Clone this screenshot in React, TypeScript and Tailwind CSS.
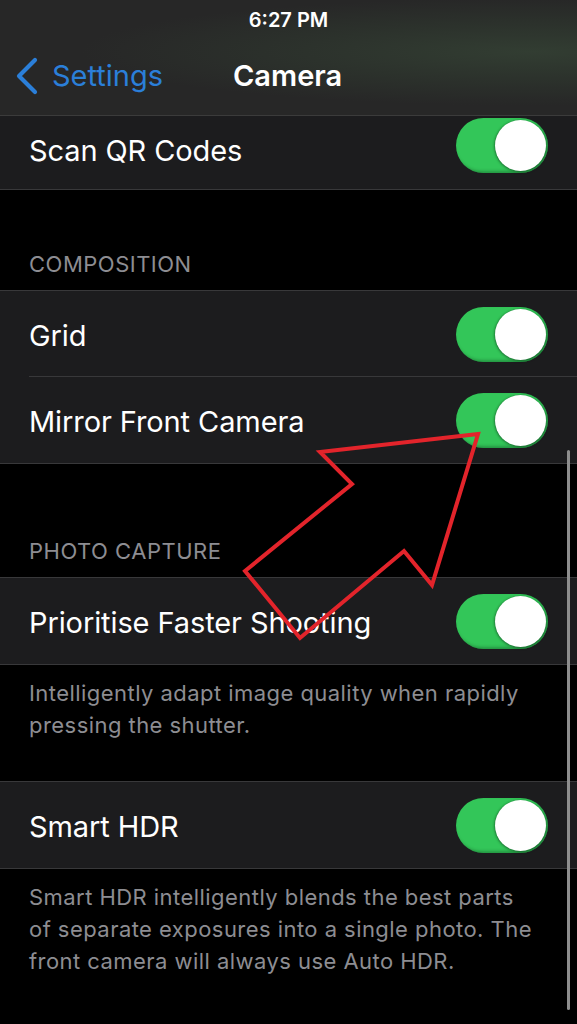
import React from "react";

function Toggle() {
  return (
    <div className="w-[92px] h-[55px] rounded-full bg-[#33c659] flex items-center justify-end p-[2px] shadow-[inset_-2px_-2px_3px_rgba(20,90,40,0.45)]">
      <div className="w-[51px] h-[51px] rounded-full bg-white shadow-[0_1px_3px_rgba(0,0,0,0.35),-1px_0_2px_rgba(20,100,40,0.4)]" />
    </div>
  );
}

function Row({ label, inset }: { label: string; inset?: boolean }) {
  return (
    <div className="h-[86px] flex items-center pl-[29px] pr-[29px] relative">
      <span className="flex-1 text-[29px] text-white tracking-[-0.1px] pt-[4px]">{label}</span>
      <Toggle />
      {inset ? <div className="absolute left-[29px] right-0 bottom-0 h-px bg-[#38383a]" /> : null}
    </div>
  );
}

export default function App() {
  return (
    <div
      className="w-[577px] h-[1024px] bg-black overflow-hidden relative"
      style={{ fontFamily: "Inter, 'Noto Sans', sans-serif" }}
    >
      {/* Header */}
      <div className="h-[116px] bg-[#272727] bg-[radial-gradient(ellipse_at_92%_45%,#323d32_0%,#2c322c_30%,transparent_60%)] border-b border-[#3b3b3b] flex flex-col">
        <div className="h-[39px] flex items-center justify-center">
          <span className="text-[20px] font-semibold text-white">6:27 PM</span>
        </div>
        <div className="h-[75px] flex items-center relative">
          <div className="flex items-center pl-[14px] gap-[12px] pb-[2px]">
            <svg width="26" height="38" viewBox="0 0 26 38" fill="none">
              <path d="M21 3 L5 19 L21 35" stroke="#2b7fd9" strokeWidth="4.2" strokeLinecap="round" strokeLinejoin="round" />
            </svg>
            <span className="text-[29px] text-[#2b7fd9] tracking-[0px]">Settings</span>
          </div>
          <span className="absolute left-[233px] top-[15px] text-[29px] font-semibold text-white tracking-[0px]">Camera</span>
        </div>
      </div>

      {/* Scan QR */}
      <div className="bg-[#1c1c1e] border-b border-[#38383a]">
        <div className="h-[73px] flex items-center pl-[29px] pr-[29px]">
          <span className="flex-1 text-[29px] text-white tracking-[-0.1px] pb-[4px]">Scan QR Codes</span>
          <div className="pb-[14px]">
            <Toggle />
          </div>
        </div>
      </div>

      {/* Composition */}
      <div className="h-[100px] flex items-end pl-[29px] pb-[9px]">
        <span className="text-[22px] text-[#8d8d92] tracking-[0.5px]">COMPOSITION</span>
      </div>
      <div className="bg-[#1c1c1e] border-y border-[#38383a]">
        <Row label="Grid" inset />
        <Row label="Mirror Front Camera" />
      </div>

      {/* Photo capture */}
      <div className="h-[113px] flex items-end pl-[29px] pb-[9px]">
        <span className="text-[22px] text-[#8d8d92] tracking-[0.5px]">PHOTO CAPTURE</span>
      </div>
      <div className="bg-[#1c1c1e] border-y border-[#38383a]">
        <Row label="Prioritise Faster Shooting" />
      </div>
      <div className="h-[116px] pl-[29px] pr-[44px] pt-[12px]">
        <p className="text-[22px] leading-[32px] text-[#8d8d92] tracking-[0.45px]">
          Intelligently adapt image quality when rapidly pressing the shutter.
        </p>
      </div>
      <div className="bg-[#1c1c1e] border-y border-[#38383a]">
        <Row label="Smart HDR" />
      </div>
      <div className="pl-[29px] pr-[44px] pt-[12px]">
        <p className="text-[22px] leading-[32px] text-[#8d8d92] tracking-[0.45px]">
          Smart HDR intelligently blends the best parts of separate exposures into a single photo. The front camera will always use Auto HDR.
        </p>
      </div>

      {/* Scrollbar */}
      <div className="absolute right-[7px] top-[450px] w-[3px] h-[560px] rounded-full bg-[#8e8e8e]" />

      {/* Red arrow annotation */}
      <svg className="absolute inset-0 pointer-events-none" width="577" height="1024" viewBox="0 0 577 1024">
        <polygon
          points="478,434 320,452 352,484 245,571 300,638 404,551 432,585"
          fill="none"
          stroke="#e3242b"
          strokeWidth="4"
          strokeLinejoin="miter"
        />
      </svg>
    </div>
  );
}
